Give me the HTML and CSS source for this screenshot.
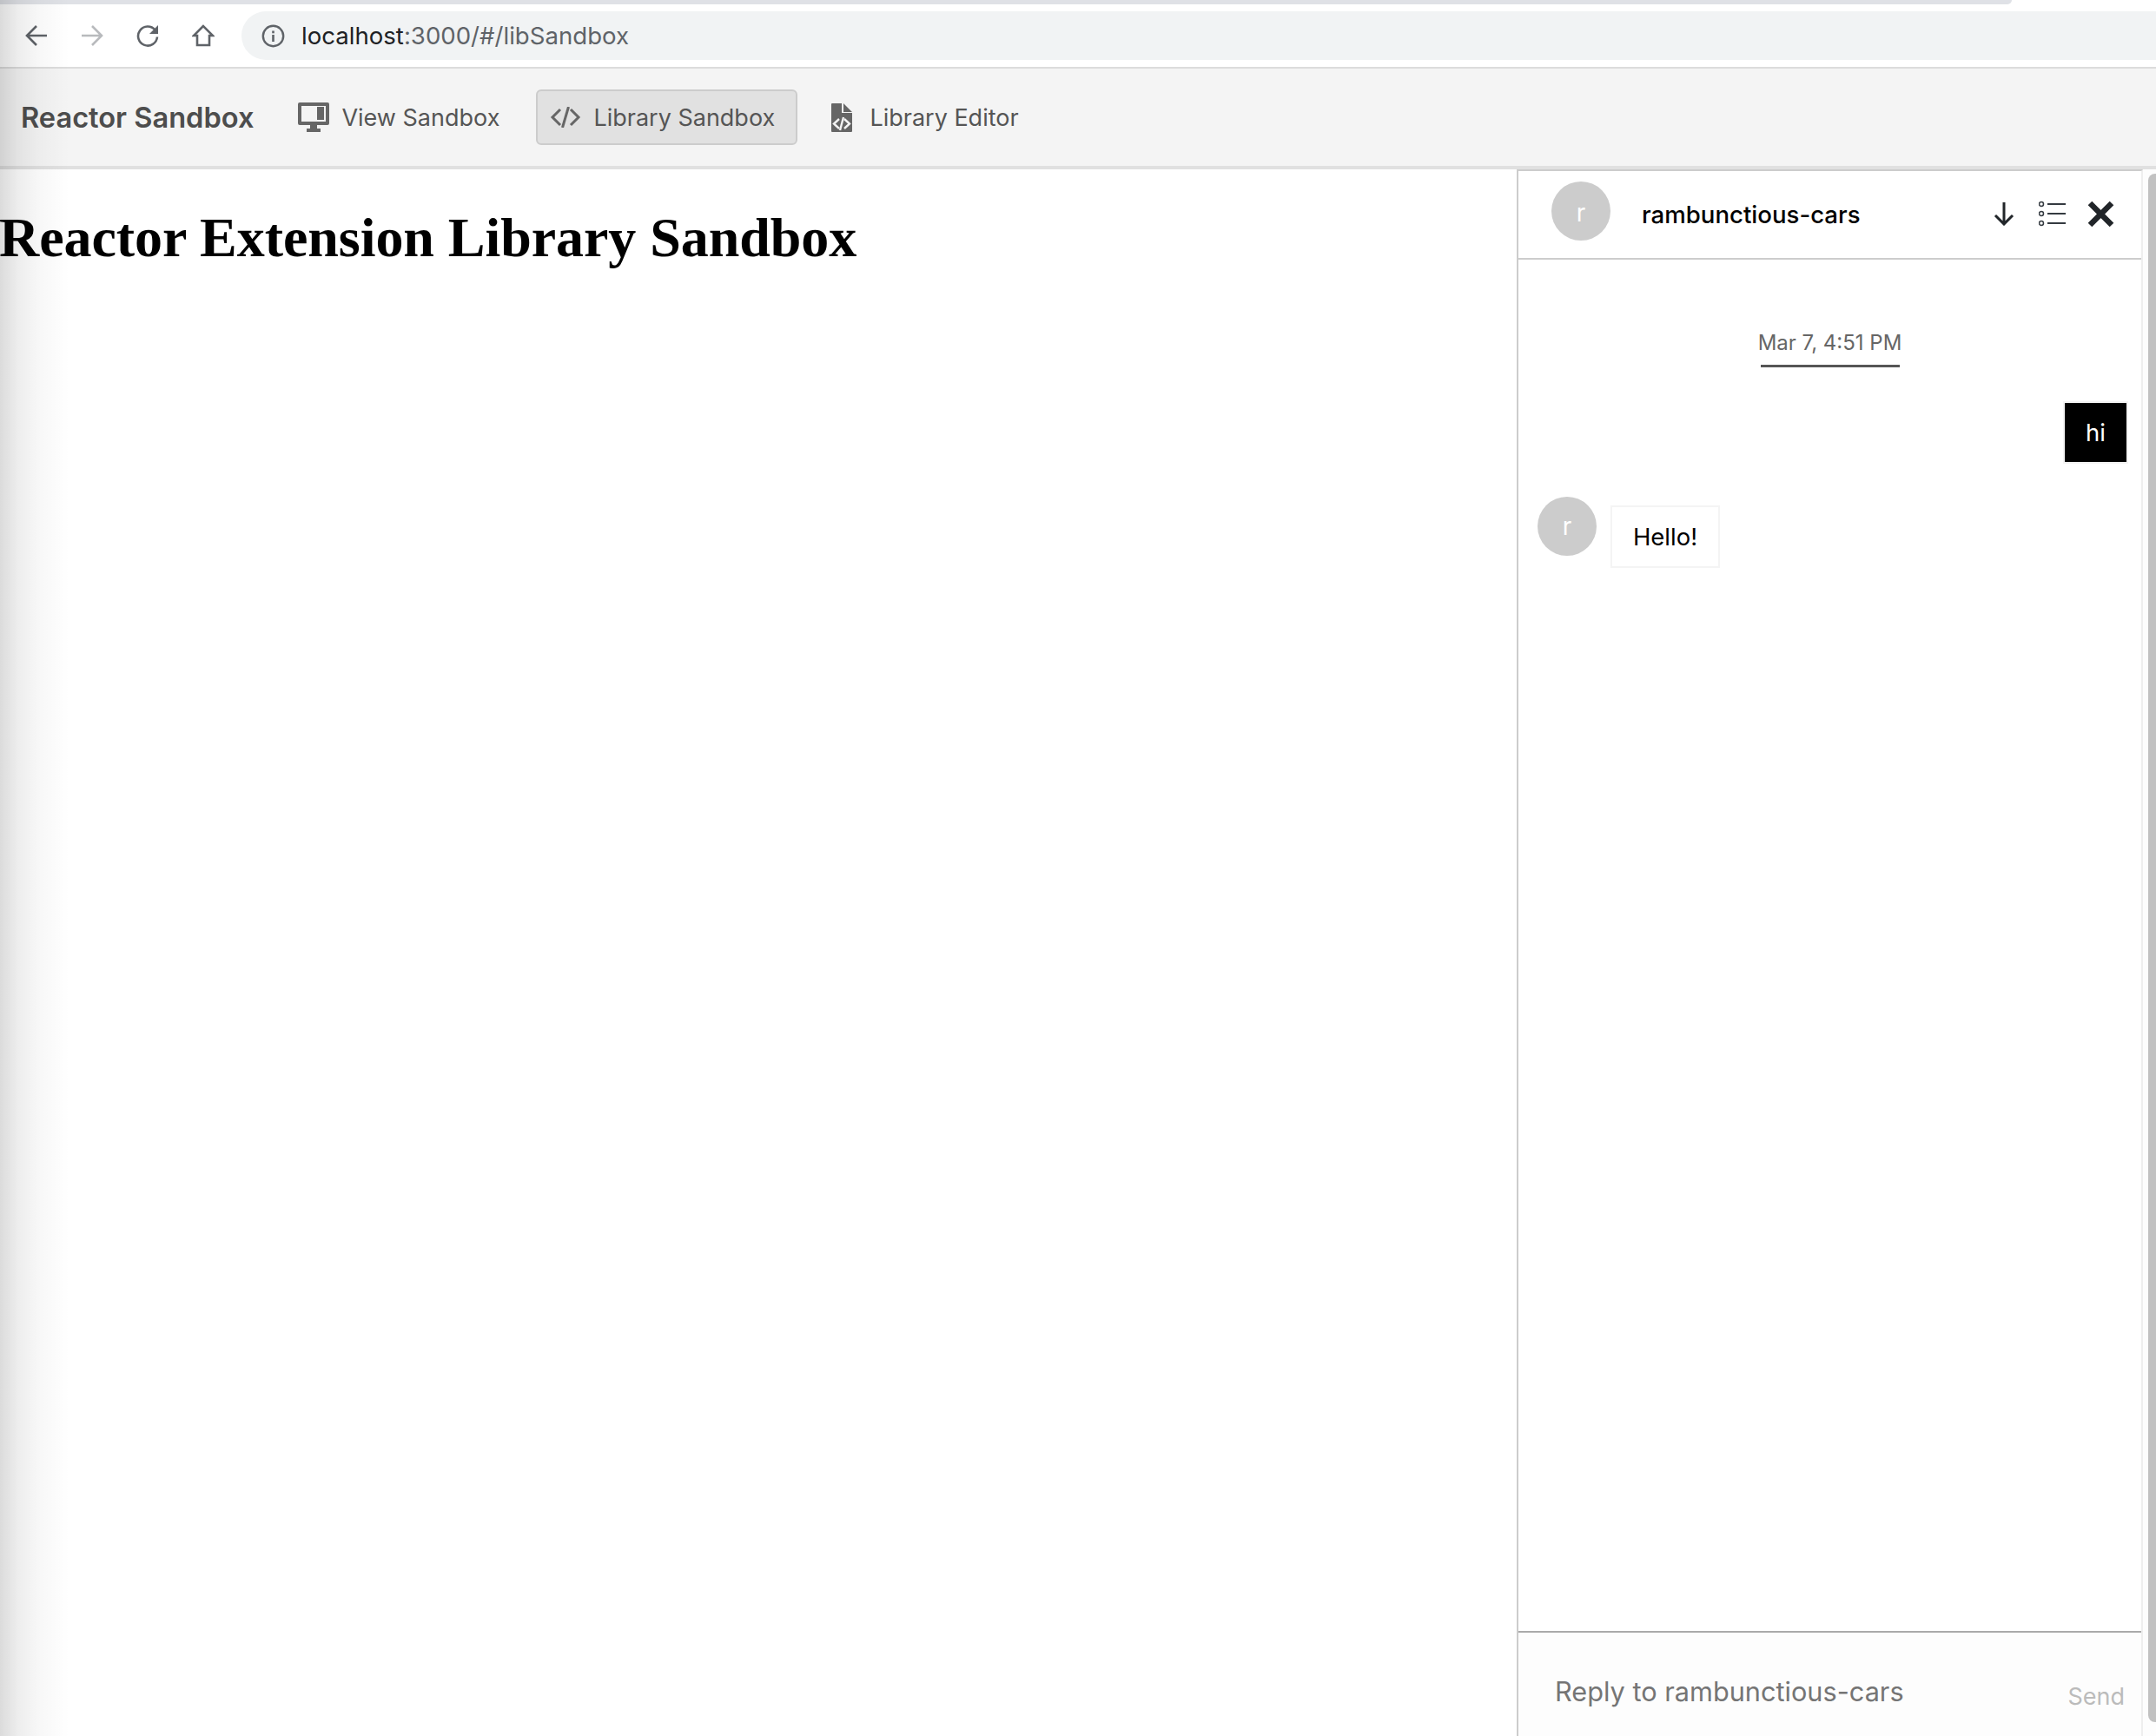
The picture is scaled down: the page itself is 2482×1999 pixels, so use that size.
FILE: index.html
```html
<!DOCTYPE html>
<html lang="en">
<head>
<meta charset="utf-8">
<title>Reactor Sandbox</title>
<link rel="stylesheet" href="styles.css">
</head>
<body>
<div class="edge-shade"></div>
<div class="progress"><div class="progress-fill"></div></div>
<div class="chrome">
  <svg class="chrome-icon" viewBox="0 0 26 26"><path d="M25 13H2M13 2 2 13l11 11" fill="none" stroke="#5f6368" stroke-width="2.6"/></svg>
  <svg class="chrome-icon" viewBox="0 0 26 26"><path d="M1 13h23M13 2l11 11-11 11" fill="none" stroke="#b8babd" stroke-width="2.6"/></svg>
  <svg class="chrome-icon" viewBox="0 0 26 26"><path d="M21.5 6.5A11 11 0 1 0 24 14.500" fill="none" stroke="#5f6368" stroke-width="2.6"/><path d="M25 1v10H15z" fill="#5f6368"/></svg>
  <svg class="chrome-icon" viewBox="0 0 26 26"><path d="M13 2 2 13h4v11h14V13h4z" fill="none" stroke="#5f6368" stroke-width="2.6" stroke-linejoin="miter"/></svg>
  <div class="omnibox">
    <svg class="info-icon" viewBox="0 0 27 27"><circle cx="13.500" cy="13.500" r="11.700" fill="none" stroke="#5f6368" stroke-width="2.400"/><rect x="12.200" y="12" width="2.600" height="8" fill="#5f6368"/><rect x="12.200" y="7.500" width="2.600" height="2.800" fill="#5f6368"/></svg>
    <span class="url"><span class="url-host">localhost</span>:3000/#/libSandbox</span>
  </div>
</div>
<nav class="navbar">
  <span class="brand">Reactor Sandbox</span>
  <a class="nav-item nav-view">
    <svg class="icon-view" viewBox="0 0 36 34"><path fill-rule="evenodd" d="M2 0h32a2 2 0 0 1 2 2v22a2 2 0 0 1-2 2H22v4h4v4H10v-4h4v-4H2a2 2 0 0 1-2-2V2a2 2 0 0 1 2-2zm2 4v18h28V4zm18 1h8v15h-8z" fill="#666"/></svg>
    <span>View Sandbox</span>
  </a>
  <a class="nav-item nav-active">
    <svg class="icon-code" viewBox="0 0 36 24"><path d="M12 3 3 12l9 9M24 3l9 9-9 9" fill="none" stroke="#666" stroke-width="3"/><path d="M21.500 0 14.500 24" fill="none" stroke="#666" stroke-width="3"/></svg>
    <span>Library Sandbox</span>
  </a>
  <a class="nav-item nav-editor">
    <svg class="icon-file" viewBox="0 0 24 33"><path d="M1 0h11v11h12v21a1 1 0 0 1-1 1H1a1 1 0 0 1-1-1V1a1 1 0 0 1 1-1zM14 0l10 10h-10z" fill="#666"/><path d="M9 18l-6 5.500 6 5.500M15 18l6 5.500-6 5.500" fill="none" stroke="#f4f4f4" stroke-width="2.400"/><path d="M14 16 10 31" fill="none" stroke="#f4f4f4" stroke-width="2.400"/></svg>
    <span>Library Editor</span>
  </a>
</nav>
<div class="main">
  <div class="content">
    <h1 class="title">Reactor Extension Library Sandbox</h1>
  </div>
  <aside class="panel">
    <header class="panel-head">
      <div class="avatar avatar-head">r</div>
      <span class="peer-name">rambunctious-cars</span>
      <svg class="head-arrow" viewBox="0 0 24 28"><path d="M12 1v25M2 16l10 10 10-10" fill="none" stroke="#212529" stroke-width="3"/></svg>
      <svg class="head-list" viewBox="0 0 31 30"><g fill="none" stroke="#343a40" stroke-width="1.500"><circle cx="3" cy="4" r="2.500"/><circle cx="3" cy="15" r="2.500"/><circle cx="3" cy="26" r="2.500"/></g><path d="M10 4h21M10 15h21M10 26h21" stroke="#343a40" stroke-width="2"/></svg>
      <svg class="head-close" viewBox="0 0 31 31"><path d="M3 3l25 25M28 3 3 28" fill="none" stroke="#212529" stroke-width="6.500"/></svg>
    </header>
    <div class="messages">
      <div class="date-row"><div class="date"><span class="date-text">Mar 7, 4:51 PM</span></div></div>
      <div class="sent-row"><div class="bubble bubble-sent">hi</div></div>
      <div class="recv-row">
        <div class="avatar">r</div>
        <div class="bubble bubble-recv">Hello!</div>
      </div>
    </div>
    <div class="composer">
      <span class="reply">Reply to rambunctious-cars</span>
      <span class="send">Send</span>
    </div>
  </aside>
  <div class="gutter"><div class="thumb"></div></div>
</div>
</body>
</html>
```
FILE: styles.css
```css
html, body {
  margin: 0;
  padding: 0;
  height: 100%;
}
body {
  width: 2482px;
  height: 1999px;
  overflow: hidden;
  display: flex;
  flex-direction: column;
  background: #fff;
  font-family: Inter, "Liberation Sans", sans-serif;
  position: relative;
}
.edge-shade {
  position: absolute;
  left: 0;
  top: 0;
  bottom: 0;
  width: 80px;
  background: linear-gradient(to right, rgba(0,0,0,.14), rgba(0,0,0,.07) 26%, rgba(0,0,0,.03) 55%, rgba(0,0,0,0));
  pointer-events: none;
  z-index: 5;
}
.progress {
  height: 5px;
  flex: none;
}
.progress-fill {
  width: 2316px;
  height: 5px;
  background: #dfe1e6;
  border-bottom-right-radius: 8px;
}
.chrome {
  flex: none;
  height: 74px;
  box-sizing: border-box;
  padding-left: 29px;
  display: flex;
  align-items: center;
  border-bottom: 2px solid #dcdcdc;
}
.chrome-icon {
  width: 26px;
  height: 26px;
  flex: none;
  margin-right: 38px;
}
.chrome-icon:nth-of-type(4) { margin-right: 31px; }
.omnibox {
  flex: 1;
  height: 56px;
  background: #f1f3f4;
  border-radius: 28px 0 0 28px;
  display: flex;
  align-items: center;
  padding-left: 23px;
}
.info-icon {
  width: 27px;
  height: 27px;
  flex: none;
}
.url {
  margin-left: 19px;
  font-size: 27.6px;
  color: #5f6368;
}
.url-host { color: #202124; }
.navbar {
  flex: none;
  height: 116px;
  box-sizing: border-box;
  background: #f4f4f4;
  border-bottom: 4px solid #e0e0e0;
  display: flex;
  align-items: center;
  padding-left: 24px;
  color: #555;
  font-size: 27px;
}
.brand {
  font-weight: 600;
  font-size: 32.6px;
  color: #4d4d4d;
  margin-right: 51px;
}
.nav-item {
  display: flex;
  align-items: center;
}
.icon-view { width: 36px; height: 34px; margin-right: 14px; }
.icon-code { width: 36px; height: 24px; margin-right: 14px; }
.icon-file { width: 24px; height: 33px; margin-right: 20px; }
.nav-view { margin-right: 42px; }
.nav-active {
  height: 64px;
  width: 301px;
  box-sizing: border-box;
  background: #e1e1e1;
  border: 2px solid #ccc;
  border-radius: 6px;
  padding-left: 14px;
  margin-right: 39px;
}
.main {
  flex: 1;
  display: flex;
  min-height: 0;
}
.content {
  width: 1746px;
  flex: none;
  white-space: nowrap;
}
.title {
  margin: 0 0 0 -1px;
  padding-top: 41px;
  font-family: "Liberation Serif", serif;
  font-weight: 700;
  font-size: 64px;
  line-height: 76px;
  letter-spacing: -0.06px;
  color: #000;
}
.panel {
  flex: none;
  width: 721px;
  box-sizing: border-box;
  border-left: 2px solid #ccc;
  border-right: 2px solid #eee;
  border-top: 2px solid #ccc;
  display: flex;
  flex-direction: column;
}
.panel-head {
  flex: none;
  height: 102px;
  box-sizing: border-box;
  border-bottom: 2px solid #ccc;
  display: flex;
  align-items: center;
  padding-left: 38px;
}
.avatar {
  width: 68px;
  height: 68px;
  flex: none;
  border-radius: 50%;
  background: #ccc;
  color: #fff;
  font-size: 28px;
  display: flex;
  align-items: center;
  justify-content: center;
}
.avatar-head {
  margin-right: 36px;
  margin-bottom: 8px;
  padding-top: 4px;
  box-sizing: border-box;
}
.peer-name {
  font-size: 27.6px;
  font-weight: 500;
  color: #000;
  flex: 1;
}
.head-arrow { width: 24px; height: 28px; flex: none; margin: 0 28px 2px 0; }
.head-list { width: 31px; height: 30px; flex: none; margin: 0 25px 2px 0; }
.head-close { width: 31px; height: 31px; flex: none; margin: 0 31px 2px 0; }
.messages {
  flex: 1;
  min-height: 0;
}
.date-row {
  display: flex;
  justify-content: center;
  padding-top: 78px;
}
.date {
  width: 160px;
  display: flex;
  justify-content: center;
  white-space: nowrap;
  font-size: 24px;
  line-height: 36px;
  color: #666;
  padding-bottom: 7px;
  border-bottom: 3px solid #555;
}
.sent-row {
  display: flex;
  justify-content: flex-end;
  padding-right: 15px;
  margin-top: 39px;
}
.bubble {
  box-sizing: border-box;
  border: 2px solid #f4f4f4;
  font-size: 27.5px;
  display: flex;
  align-items: center;
  justify-content: center;
}
.bubble-sent {
  width: 75px;
  height: 72px;
  background: #000;
  color: #fff;
}
.recv-row {
  display: flex;
  align-items: flex-start;
  padding-left: 22px;
  margin-top: 38px;
}
.bubble-recv {
  width: 126px;
  height: 72px;
  margin-left: 16px;
  margin-top: 10px;
  color: #000;
}
.composer {
  flex: none;
  height: 121px;
  box-sizing: border-box;
  border-top: 2px solid #aaa;
  background: #fdfdfd;
  display: flex;
  align-items: flex-start;
  padding-left: 42px;
  padding-top: 46px;
}
.reply {
  font-size: 30.7px;
  line-height: 44px;
  color: #757575;
  flex: 1;
}
.send {
  font-size: 27px;
  line-height: 44px;
  margin-top: 6px;
  margin-right: 19px;
  color: #bbb;
}
.gutter {
  flex: 1;
  background: #fdfdfd;
  padding: 5px 0 0 6px;
}
.thumb {
  height: 1783px;
  background: #c1c1c1;
  border-radius: 8px 0 0 8px;
}
```
